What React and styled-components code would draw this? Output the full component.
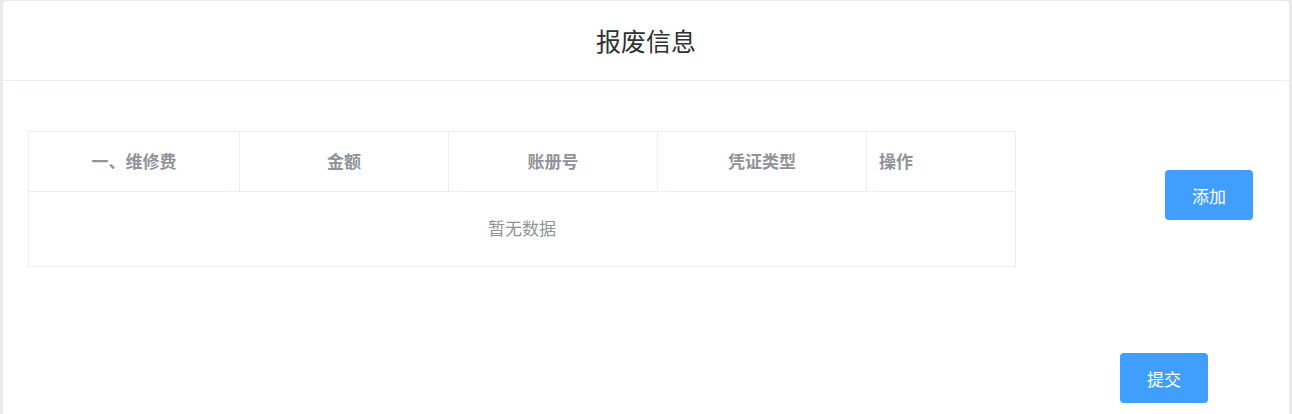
import React from 'react';
import styled, { createGlobalStyle } from 'styled-components';

const GlobalStyle = createGlobalStyle`
  html, body {
    margin: 0;
    padding: 0;
    background: #e9e9ee;
    font-family: "Noto Sans CJK SC", "Noto Sans", sans-serif;
  }
`;

const Page = styled.div`
  padding: 1px 3px 0 3px;
  height: 413px;
  overflow: hidden;
`;

const Card = styled.div`
  background: #fff;
  border-radius: 4px;
  height: 460px;
`;

const CardHeader = styled.div`
  height: 79px;
  border-bottom: 1px solid #ebeef5;
  display: flex;
  align-items: center;
  justify-content: center;
`;

const Title = styled.h2`
  margin: 0;
  font-size: 25px;
  font-weight: 400;
  color: #303133;
  line-height: 1;
`;

const CardBody = styled.div`
  padding: 50px 36px 0 25px;
`;

const TopRow = styled.div`
  display: flex;
  justify-content: space-between;
  align-items: flex-start;
`;

const Table = styled.div`
  width: 988px;
  border: 1px solid #ebeef5;
  box-sizing: border-box;
`;

const HeadRow = styled.div`
  display: grid;
  grid-template-columns: 211px 209px 209px 209px 1fr;
  height: 59px;
  border-bottom: 1px solid #ebeef5;
`;

const HeadCell = styled.div`
  display: flex;
  align-items: center;
  justify-content: ${p => (p.$left ? 'flex-start' : 'center')};
  padding-left: ${p => (p.$left ? '12px' : '0')};
  padding-bottom: 3px;
  border-right: ${p => (p.$last ? 'none' : '1px solid #ebeef5')};
  font-size: 17px;
  font-weight: 700;
  color: #909399;
`;

const Empty = styled.div`
  height: 74px;
  padding-bottom: 4px;
  box-sizing: border-box;
  display: flex;
  align-items: center;
  justify-content: center;
  font-size: 17px;
  color: #909399;
`;

const Button = styled.button`
  width: 88px;
  height: 50px;
  border: none;
  border-radius: 4px;
  background: #409eff;
  color: #fff;
  font-family: inherit;
  font-size: 17px;
  cursor: pointer;
  margin-top: ${p => p.$top || '0'};
`;

const BottomRow = styled.div`
  display: flex;
  justify-content: flex-end;
  padding-right: 45px;
  margin-top: 86px;
`;

const columns = ['一、维修费', '金额', '账册号', '凭证类型', '操作'];

export default function App() {
  return (
    <>
      <GlobalStyle />
      <Page>
        <Card>
          <CardHeader>
            <Title>报废信息</Title>
          </CardHeader>
          <CardBody>
            <TopRow>
              <Table>
                <HeadRow>
                  {columns.map((c, i) => (
                    <HeadCell key={c} $left={i === 4} $last={i === 4}>
                      {c}
                    </HeadCell>
                  ))}
                </HeadRow>
                <Empty>暂无数据</Empty>
              </Table>
              <Button $top="39px">添加</Button>
            </TopRow>
            <BottomRow>
              <Button>提交</Button>
            </BottomRow>
          </CardBody>
        </Card>
      </Page>
    </>
  );
}
